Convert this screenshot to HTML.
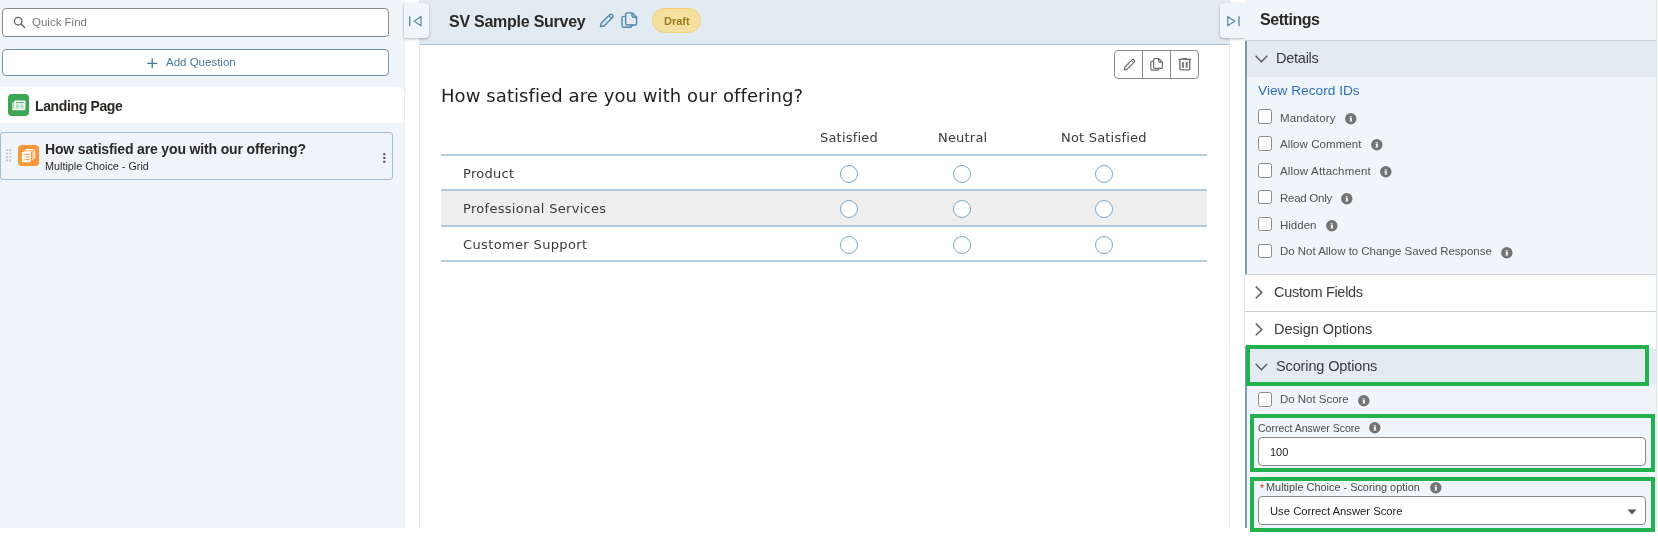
<!DOCTYPE html>
<html lang="en">
<head>
<meta charset="utf-8">
<title>SV Sample Survey</title>
<style>
*{box-sizing:border-box;margin:0;padding:0}
html,body{width:1658px;height:536px;overflow:hidden;background:#fff}
body{font-family:"Liberation Sans",sans-serif;color:#222;position:relative;font-size:12px}
.abs{position:absolute}
.t{position:absolute;white-space:nowrap;line-height:1;will-change:transform}
svg{position:absolute;overflow:visible}
/* left panel */
#left{left:0;top:0;width:404.5px;height:528px;background:#f0f5f9;border-right:1px solid #e9eef4}
#qf{left:2px;top:8px;width:387px;height:29px;border:1px solid #8a8a8a;border-radius:4px;background:#fff}
#addq{left:2px;top:49px;width:387px;height:27px;border:1px solid #6a96b3;border-radius:4px;background:#fff}
#lp{left:0;top:87px;width:404px;height:36px;background:#fff;border-radius:0 6px 0 0}
#lpicon{left:7.7px;top:94px;width:21.4px;height:21.7px;border-radius:4px;background:#3ba755}
#qitem{left:0;top:132px;width:393px;height:48px;border:1px solid #9fbfd3;border-radius:3px;background:#eff4f9}
#qicon{left:17.5px;top:144.5px;width:21.5px;height:21.5px;border-radius:4px;background:#f89838}
.b14{font-size:14px;font-weight:bold;color:#2b2826}
/* main */
#mainborderL{left:419px;top:0;width:1px;height:528px;background:#dde8ef}
#hdr{left:420px;top:0;width:810px;height:45px;background:#e3ebf2;border-bottom:1px solid #a6c3d5}
#mainborderR{left:1229px;top:45px;width:1px;height:483px;background:#e3ecf4}
#togL{left:404px;top:3px;width:25px;height:35px;background:#f0f5f9;border-radius:0 4px 4px 0;box-shadow:0 1px 3px rgba(0,0,0,.3)}
#togR{left:1220px;top:3px;width:25px;height:35px;background:#f0f5f9;border-radius:4px 0 0 4px;box-shadow:0 1px 3px rgba(0,0,0,.3)}
#draft{left:652px;top:8px;width:49px;height:25px;border-radius:13px;background:#f6e0a0;border:1px solid #f3d178}
.dv{font-family:"DejaVu Sans","Liberation Sans",sans-serif;color:#3a3a3a;letter-spacing:0.2px}
.line{position:absolute;left:441px;width:766px;height:2px;background:#b3cddd}
.radio{position:absolute;width:18px;height:18px;border:1px solid #7aa7c7;border-radius:50%;background:#fff}
#tools{left:1114px;top:50px;width:85px;height:29px;border:1px solid #8a8a8a;border-radius:4px;background:#fff}
.tdiv{position:absolute;top:50px;width:1px;height:29px;background:#8a8a8a}
/* right */
#right{left:1245px;top:0;width:412px;height:528px;background:#f0f5f9;border-right:1px solid #e2e7eb}
#sethdr{left:1245px;top:0;width:411px;height:41px;background:#f0f5f9;border-bottom:1px solid #cfcfcf}
.sechdr{position:absolute;left:1245px;width:411px;background:#e3ebf2}
.secwhite{position:absolute;left:1244px;width:412px;background:#fff;border-top:1px solid #cdcdcd;border-left:1px solid #e4eaef}
.lbar{position:absolute;left:1245px;width:2px;background:#70a0bc}
.cb{position:absolute;left:1257.5px;width:14.5px;height:14.5px;border:1px solid #8a8a8a;border-radius:2.5px;background:#fff}
.lab{font-size:11.5px;color:#505050}
.info{position:absolute;width:11.5px;height:11.5px;border-radius:50%;background:#696969;color:#fff;font-size:8px;font-weight:bold;text-align:center;line-height:11.5px;font-family:"Liberation Sans",sans-serif}
.sec{font-size:14.5px;color:#3a3a3a}
.grn{position:absolute;border:4px solid #22b14c}
.inp{position:absolute;left:1258px;width:388px;height:29px;border:1px solid #8a8a8a;border-radius:4px;background:#fff}
</style>
</head>
<body>
<!-- LEFT -->
<div id="left" class="abs"></div>
<div id="qf" class="abs"></div>
<svg style="left:13px;top:16px" width="13" height="13" viewBox="0 0 13 13"><circle cx="5.2" cy="5.2" r="3.8" fill="none" stroke="#636363" stroke-width="1.3"/><path d="M8 8 L11.6 11.6" stroke="#636363" stroke-width="1.4" stroke-linecap="round"/></svg>
<div class="t" id="t_qf" style="left:32px;top:17px;font-size:11.5px;color:#787878">Quick Find</div>
<div id="addq" class="abs"></div>
<svg style="left:147px;top:58px" width="10" height="10" viewBox="0 0 10 10"><path d="M5.2 0.3V10.3M0.2 5.3H10.2" stroke="#47799b" stroke-width="1.3"/></svg>
<div class="t" id="t_add" style="left:166px;top:57px;font-size:11.5px;color:#47799b">Add Question</div>
<div id="lp" class="abs"></div>
<div id="lpicon" class="abs"></div>
<svg style="left:11.5px;top:99.5px" width="14" height="11" viewBox="0 0 14 11"><path d="M0.4 2.2H1.6V10.2H0.4Z" fill="#fff"/><rect x="2.2" y="0.4" width="11.2" height="9.3" rx="0.8" fill="#fff"/><path d="M1 9.6H12.6" stroke="#fff" stroke-width="1.2"/><path d="M4 2.7H11.6" stroke="#3ba755" stroke-width="1"/><path d="M4 5H7.2M8.4 5H11.6M4 6.6H7.2M8.4 6.6H11.6M4 8.1H7.2M8.4 8.1H11.6" stroke="#7cc78e" stroke-width="0.9"/></svg>
<div class="t b14" id="t_lp" style="left:35px;top:98.5px;letter-spacing:-0.36px">Landing Page</div>
<div id="qitem" class="abs"></div>
<div id="qicon" class="abs"></div>
<svg style="left:21px;top:148px" width="15" height="15" viewBox="0 0 15 15"><path d="M4.6 1.5H12.4a1.2 1.2 0 0 1 1.2 1.2V10.6" fill="none" stroke="#fff" stroke-width="1"/><path d="M3 3.1H10.8a1.2 1.2 0 0 1 1.2 1.2V12.2" fill="none" stroke="#fff" stroke-width="1"/><rect x="0.9" y="3.7" width="9" height="10.5" rx="1.4" fill="#fff"/><path d="M2.6 6.4H3.6M4.6 6.4H8.4M2.6 9H3.6M4.6 9H8.4M2.6 11.6H3.6M4.6 11.6H8.4" stroke="#f89838" stroke-width="1.1"/></svg>
<svg style="left:6px;top:149px" width="6" height="13" viewBox="0 0 6 13"><g fill="#c3c7cb"><rect x="0.2" y="0.3" width="1.8" height="1.8"/><rect x="3.4" y="0.3" width="1.8" height="1.8"/><rect x="0.2" y="3.7" width="1.8" height="1.8"/><rect x="3.4" y="3.7" width="1.8" height="1.8"/><rect x="0.2" y="7.1" width="1.8" height="1.8"/><rect x="3.4" y="7.1" width="1.8" height="1.8"/><rect x="0.2" y="10.5" width="1.8" height="1.8"/><rect x="3.4" y="10.5" width="1.8" height="1.8"/></g></svg>
<svg style="left:382.6px;top:153px" width="3" height="10" viewBox="0 0 3 10"><g fill="#4a4a4a"><rect x="0.3" y="0.2" width="2" height="2"/><rect x="0.3" y="4" width="2" height="2"/><rect x="0.3" y="7.8" width="2" height="2"/></g></svg>
<div class="t b14" id="t_q1" style="left:45px;top:142px;letter-spacing:-0.15px">How satisfied are you with our offering?</div>
<div class="t" id="t_q2" style="left:45px;top:161px;font-size:10.8px;color:#2b2826">Multiple Choice - Grid</div>

<!-- MAIN -->
<div id="mainborderL" class="abs"></div>
<div id="hdr" class="abs"></div>
<div id="mainborderR" class="abs"></div>
<div id="togL" class="abs"></div>
<div id="togR" class="abs"></div>
<svg style="left:408px;top:15px" width="15" height="13" viewBox="0 0 15 13"><path d="M1.7 1.2V11.2" stroke="#5a8fb4" stroke-width="1.4" fill="none"/><path d="M13 1.6V10.8L6 6.2Z" stroke="#5a8fb4" stroke-width="1.3" fill="none" stroke-linejoin="round"/></svg>
<svg style="left:1226px;top:15px" width="15" height="13" viewBox="0 0 15 13"><path d="M13 1.2V11.2" stroke="#5a8fb4" stroke-width="1.4" fill="none"/><path d="M1.7 1.6V10.8L8.7 6.2Z" stroke="#5a8fb4" stroke-width="1.3" fill="none" stroke-linejoin="round"/></svg>
<div class="t" id="t_title" style="left:448.5px;top:13.5px;font-size:16px;letter-spacing:-0.25px;font-weight:bold;color:#2b2826">SV Sample Survey</div>
<svg style="left:599px;top:13px" width="16" height="15" viewBox="0 0 16 15"><path d="M1.4 13.6L2.3 10.2L11 1.6a1.2 1.2 0 0 1 1.7 0L13.7 2.6a1.2 1.2 0 0 1 0 1.7L5 13Z" fill="none" stroke="#4f84ab" stroke-width="1.4" stroke-linejoin="round"/><path d="M10 2.8L12.6 5.4" stroke="#4f84ab" stroke-width="1.2"/></svg>
<svg style="left:621px;top:12px" width="17" height="17" viewBox="0 0 17 17"><g fill="none" stroke="#4f84ab" stroke-width="1.4" stroke-linejoin="round"><path d="M4.6 4.4H2.6a1.6 1.6 0 0 0 -1.6 1.6V13.6a1.6 1.6 0 0 0 1.6 1.6H9.4a1.6 1.6 0 0 0 1.6 -1.6V13"/><path d="M6.2 0.9H11.2L15.6 5.2V11.4a1.6 1.6 0 0 1 -1.6 1.6H6.2a1.6 1.6 0 0 1 -1.6 -1.6V2.5a1.6 1.6 0 0 1 1.6 -1.6Z"/><path d="M11 1.2V3.8a1.4 1.4 0 0 0 1.4 1.4H15.3"/></g></svg>
<div id="draft" class="abs"></div>
<div class="t" id="t_draft" style="left:664px;top:16px;font-size:11px;font-weight:bold;color:#9c7b1e">Draft</div>
<div class="t dv" id="t_qtext" style="left:441px;top:87px;font-size:18px;letter-spacing:0.08px;color:#222">How satisfied are you with our offering?</div>
<div id="tools" class="abs"></div>
<div class="tdiv" style="left:1142px"></div>
<div class="tdiv" style="left:1170px"></div>
<svg style="left:1122.5px;top:58px" width="13" height="13" viewBox="0 0 13 13"><path d="M1.2 11.9L2 9L9.2 1.7a1 1 0 0 1 1.4 0L11.4 2.5a1 1 0 0 1 0 1.4L4.2 11.2Z" fill="none" stroke="#6e6e6e" stroke-width="1.2" stroke-linejoin="round"/><path d="M8.5 2.6L10.5 4.6" stroke="#6e6e6e" stroke-width="1"/></svg>
<svg style="left:1150px;top:58px" width="14" height="13" viewBox="0 0 14 13"><g fill="none" stroke="#6e6e6e" stroke-width="1.2" stroke-linejoin="round"><path d="M3.6 3.4H2a1.2 1.2 0 0 0 -1.2 1.2V11a1.2 1.2 0 0 0 1.2 1.2H7.4a1.2 1.2 0 0 0 1.2 -1.2V10.4"/><path d="M4.8 0.7H8.8L12.4 4.2V9.2a1.2 1.2 0 0 1 -1.2 1.2H4.8a1.2 1.2 0 0 1 -1.2 -1.2V1.9a1.2 1.2 0 0 1 1.2 -1.2Z"/><path d="M8.6 1V3a1.1 1.1 0 0 0 1.1 1.1H12.2"/></g></svg>
<svg style="left:1178px;top:58px" width="14" height="13" viewBox="0 0 14 13"><g fill="none" stroke="#6e6e6e"><path d="M0.4 1.3H13.2" stroke-width="1.3"/><path d="M4.6 1V0.5H9V1" stroke-width="1"/><path d="M1.9 1.6V11a0.9 0.9 0 0 0 0.9 0.9H10.8a0.9 0.9 0 0 0 0.9 -0.9V1.6" stroke-width="1.4"/><path d="M4.9 3.9V9.8M8.7 3.9V9.8" stroke-width="1.8"/></g></svg>

<div class="t dv" id="t_h1" style="left:820px;top:130.5px;font-size:13px">Satisfied</div>
<div class="t dv" id="t_h2" style="left:938px;top:130.5px;font-size:13px">Neutral</div>
<div class="t dv" id="t_h3" style="left:1061px;top:130.5px;font-size:13px">Not Satisfied</div>
<div class="abs" style="left:441px;top:191px;width:766px;height:34px;background:#eeeeee"></div>
<div class="line" style="top:154px"></div>
<div class="line" style="top:189px"></div>
<div class="line" style="top:225px"></div>
<div class="line" style="top:260px"></div>
<div class="t dv" id="t_r1" style="left:463px;top:167px;font-size:13px;letter-spacing:0.3px">Product</div>
<div class="t dv" id="t_r2" style="left:463px;top:202px;font-size:13px;letter-spacing:0.3px">Professional Services</div>
<div class="t dv" id="t_r3" style="left:463px;top:238px;font-size:13px;letter-spacing:0.36px">Customer Support</div>
<div class="radio" style="left:840px;top:165px"></div><div class="radio" style="left:953px;top:165px"></div><div class="radio" style="left:1095px;top:165px"></div>
<div class="radio" style="left:840px;top:200px"></div><div class="radio" style="left:953px;top:200px"></div><div class="radio" style="left:1095px;top:200px"></div>
<div class="radio" style="left:840px;top:236px"></div><div class="radio" style="left:953px;top:236px"></div><div class="radio" style="left:1095px;top:236px"></div>

<!-- RIGHT -->
<div id="right" class="abs"></div>
<div id="sethdr" class="abs"></div>
<div class="t" id="t_set" style="left:1260px;top:12px;font-size:16px;letter-spacing:-0.45px;font-weight:bold;color:#2b2826">Settings</div>
<div class="sechdr" style="top:41px;height:36px"></div>
<svg style="left:1255px;top:55px" width="13" height="8" viewBox="0 0 13 8"><path d="M0.6 0.8L6.4 6.8L12.2 0.8" fill="none" stroke="#555" stroke-width="1.3"/></svg>
<div class="t sec" id="t_det" style="left:1276px;top:50.5px;letter-spacing:-0.25px">Details</div>
<div class="t" id="t_vri" style="left:1258px;top:83.5px;font-size:13.7px;color:#2f6fbf">View Record IDs</div>
<div class="cb" style="top:109.3px"></div><div class="t lab" id="t_c1" style="left:1280px;top:112.5px;letter-spacing:0.14px">Mandatory</div><svg style="left:1344.7px;top:112.6px" width="12" height="12" viewBox="0 0 12 12"><circle cx="5.8" cy="5.8" r="5.7" fill="#737373"/><path d="M4.7 3.2H6.8V4.4H4.7ZM4.5 5.1H6.9V8.1H7.3V8.6H4.3V8.1H4.9V5.6H4.5Z" fill="#fff" fill-opacity="0.92"/></svg>
<div class="cb" style="top:136.2px"></div><div class="t lab" id="t_c2" style="left:1280px;top:139.2px;letter-spacing:0.08px">Allow Comment</div><svg style="left:1370.6px;top:139.4px" width="12" height="12" viewBox="0 0 12 12"><circle cx="5.8" cy="5.8" r="5.7" fill="#737373"/><path d="M4.7 3.2H6.8V4.4H4.7ZM4.5 5.1H6.9V8.1H7.3V8.6H4.3V8.1H4.9V5.6H4.5Z" fill="#fff" fill-opacity="0.92"/></svg>
<div class="cb" style="top:163.0px"></div><div class="t lab" id="t_c3" style="left:1280px;top:166px;letter-spacing:0.17px">Allow Attachment</div><svg style="left:1380.3px;top:166.2px" width="12" height="12" viewBox="0 0 12 12"><circle cx="5.8" cy="5.8" r="5.7" fill="#737373"/><path d="M4.7 3.2H6.8V4.4H4.7ZM4.5 5.1H6.9V8.1H7.3V8.6H4.3V8.1H4.9V5.6H4.5Z" fill="#fff" fill-opacity="0.92"/></svg>
<div class="cb" style="top:189.9px"></div><div class="t lab" id="t_c4" style="left:1280px;top:192.7px;letter-spacing:-0.27px">Read Only</div><svg style="left:1341.1px;top:192.9px" width="12" height="12" viewBox="0 0 12 12"><circle cx="5.8" cy="5.8" r="5.7" fill="#737373"/><path d="M4.7 3.2H6.8V4.4H4.7ZM4.5 5.1H6.9V8.1H7.3V8.6H4.3V8.1H4.9V5.6H4.5Z" fill="#fff" fill-opacity="0.92"/></svg>
<div class="cb" style="top:216.7px"></div><div class="t lab" id="t_c5" style="left:1280px;top:219.5px;letter-spacing:0px">Hidden</div><svg style="left:1325.6px;top:219.7px" width="12" height="12" viewBox="0 0 12 12"><circle cx="5.8" cy="5.8" r="5.7" fill="#737373"/><path d="M4.7 3.2H6.8V4.4H4.7ZM4.5 5.1H6.9V8.1H7.3V8.6H4.3V8.1H4.9V5.6H4.5Z" fill="#fff" fill-opacity="0.92"/></svg>
<div class="cb" style="top:243.5px"></div><div class="t lab" id="t_c6" style="left:1280px;top:246.2px;letter-spacing:-0.03px">Do Not Allow to Change Saved Response</div><svg style="left:1501.0px;top:246.5px" width="12" height="12" viewBox="0 0 12 12"><circle cx="5.8" cy="5.8" r="5.7" fill="#737373"/><path d="M4.7 3.2H6.8V4.4H4.7ZM4.5 5.1H6.9V8.1H7.3V8.6H4.3V8.1H4.9V5.6H4.5Z" fill="#fff" fill-opacity="0.92"/></svg>
<div class="lbar" style="top:41px;height:233px"></div>

<div class="secwhite" style="top:274px;height:37px"></div>
<svg style="left:1255.4px;top:286px" width="8" height="13" viewBox="0 0 8 13"><path d="M0.8 0.6L6.8 6.4L0.8 12.2" fill="none" stroke="#606060" stroke-width="1.5"/></svg>
<div class="t sec" id="t_cf" style="left:1274px;top:285px;letter-spacing:-0.3px">Custom Fields</div>
<div class="secwhite" style="top:311px;height:37px"></div>
<svg style="left:1255.4px;top:323px" width="8" height="13" viewBox="0 0 8 13"><path d="M0.8 0.6L6.8 6.4L0.8 12.2" fill="none" stroke="#606060" stroke-width="1.5"/></svg>
<div class="t sec" id="t_do" style="left:1274px;top:322px;letter-spacing:-0.07px">Design Options</div>
<div class="sechdr" style="top:348px;height:36px"></div>
<svg style="left:1255px;top:363px" width="13" height="8" viewBox="0 0 13 8"><path d="M0.6 0.8L6.4 6.8L12.2 0.8" fill="none" stroke="#555" stroke-width="1.3"/></svg>
<div class="t sec" id="t_so" style="left:1276px;top:359px;letter-spacing:-0.13px">Scoring Options</div>
<div class="lbar" style="top:346px;height:182px"></div>
<div class="grn" style="left:1246px;top:345px;width:1403px;height:41px;width:403px"></div>
<div class="cb" style="top:392px"></div><div class="t lab" id="t_c7" style="left:1280px;top:394px;letter-spacing:-0.03px">Do Not Score</div><svg style="left:1358.0px;top:395.0px" width="12" height="12" viewBox="0 0 12 12"><circle cx="5.8" cy="5.8" r="5.7" fill="#737373"/><path d="M4.7 3.2H6.8V4.4H4.7ZM4.5 5.1H6.9V8.1H7.3V8.6H4.3V8.1H4.9V5.6H4.5Z" fill="#fff" fill-opacity="0.92"/></svg>
<div class="t" id="t_cas" style="left:1258px;top:423px;font-size:10.5px;color:#4a4a4a">Correct Answer Score</div><svg style="left:1369.0px;top:422.0px" width="12" height="12" viewBox="0 0 12 12"><circle cx="5.8" cy="5.8" r="5.7" fill="#737373"/><path d="M4.7 3.2H6.8V4.4H4.7ZM4.5 5.1H6.9V8.1H7.3V8.6H4.3V8.1H4.9V5.6H4.5Z" fill="#fff" fill-opacity="0.92"/></svg>
<div class="inp" style="top:437px"></div>
<div class="t" id="t_100" style="left:1270px;top:447px;font-size:11px;color:#222">100</div>
<div class="grn" style="left:1250px;top:414px;width:405px;height:58px"></div>
<div class="t" style="left:1260px;top:483px;font-size:10.5px;color:#d0342c">*</div>
<div class="t" id="t_mc" style="left:1266px;top:482px;font-size:10.9px;color:#4a4a4a">Multiple Choice - Scoring option</div><svg style="left:1430.0px;top:482.0px" width="12" height="12" viewBox="0 0 12 12"><circle cx="5.8" cy="5.8" r="5.7" fill="#737373"/><path d="M4.7 3.2H6.8V4.4H4.7ZM4.5 5.1H6.9V8.1H7.3V8.6H4.3V8.1H4.9V5.6H4.5Z" fill="#fff" fill-opacity="0.92"/></svg>
<div class="inp" style="top:496px"></div>
<div class="t" id="t_use" style="left:1270px;top:506px;font-size:11.25px;color:#222">Use Correct Answer Score</div>
<svg style="left:1627px;top:509px" width="10" height="6" viewBox="0 0 10 6"><path d="M0.5 0.5H9.5L5 5.5Z" fill="#555"/></svg>
<div class="grn" style="left:1250px;top:476.5px;width:405px;height:55px"></div>
</body>
</html>
